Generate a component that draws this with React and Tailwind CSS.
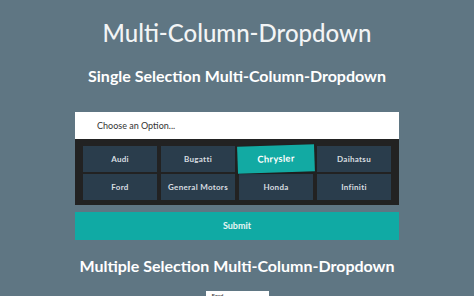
import React, { useState } from 'react';

const cars = ['Audi', 'Bugatti', 'Chrysler', 'Daihatsu', 'Ford', 'General Motors', 'Honda', 'Infiniti'];

const App = () => {
  const [selected, setSelected] = useState('Chrysler');

  return (
    <div className="h-[296px] overflow-hidden bg-[#5f7683] text-white font-['Lato',sans-serif]">
      <h1 className="pt-[18px] text-center text-[24px] leading-[30px] font-medium text-[#f2f4f5]">Multi-Column-Dropdown</h1>
      <h2 className="mt-[18px] text-center text-[16px] leading-[20px] font-bold">Single Selection Multi-Column-Dropdown</h2>

      <div className="mx-[75px] mt-[26px]">
        <div className="h-[27px] bg-white text-[#333] text-[9px] flex items-center pl-[22px]">Choose an Option...</div>
        <div className="bg-[#222222] px-[8px] pt-[7px] pb-[5px] grid grid-cols-4 gap-x-[4px] gap-y-[2px]">
          {cars.map((c) => {
            const on = c === selected;
            return (
              <button
                key={c}
                onClick={() => setSelected(c)}
                className={
                  on
                    ? 'h-[26px] bg-[#12aaa3] text-white text-[9px] font-bold tracking-[0.3px] -rotate-2 scale-[1.04] shadow'
                    : 'h-[26px] bg-[#2a3d4c] text-[#d8dde0] text-[8px] font-bold tracking-[0.3px]'
                }
              >
                {c}
              </button>
            );
          })}
        </div>
        <button className="mt-[7px] w-full h-[28px] bg-[#10aaa4] text-[#e8f6f5] text-[9px] font-bold">Submit</button>
      </div>

      <h2 className="mt-[16px] text-center text-[16px] leading-[20px] font-bold">Multiple Selection Multi-Column-Dropdown</h2>
      <div className="mx-auto mt-[15px] w-[63px] h-[10px] bg-white text-[#333] text-[6px] leading-[10px] pl-[6px]">Ford</div>
    </div>
  );
};

export default App;
